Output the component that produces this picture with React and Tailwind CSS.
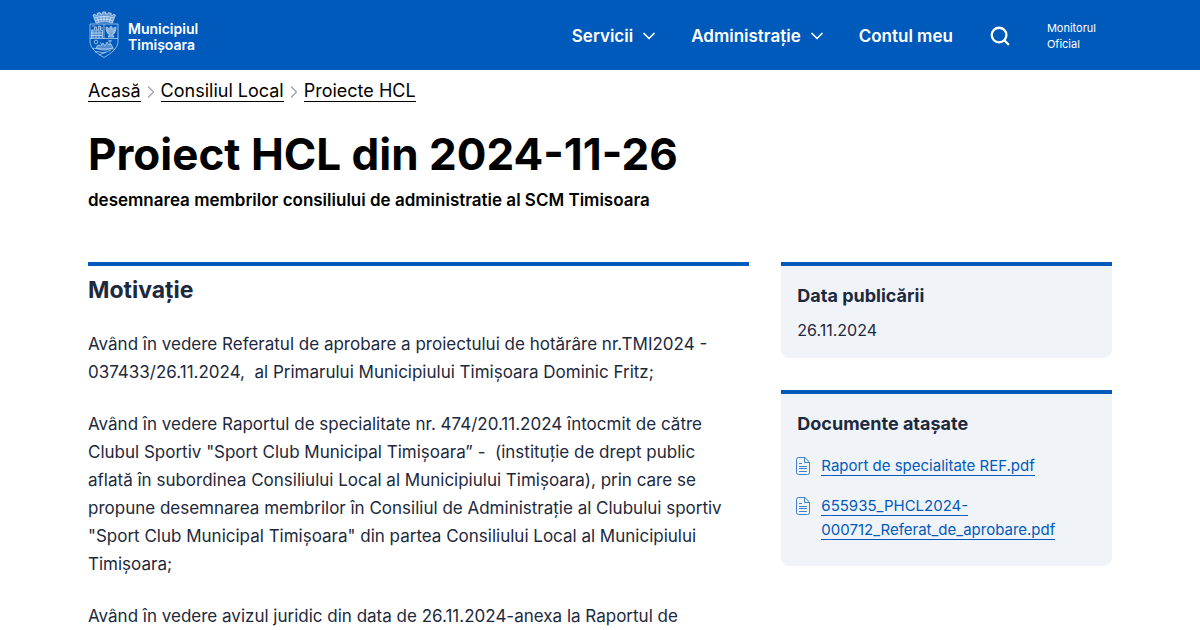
import React from 'react';
import { ChevronDown, ChevronRight, Search } from 'lucide-react';

const BREADCRUMBS = ['Acasă', 'Consiliul Local', 'Proiecte HCL'];

const DOCUMENTS = [
  'Raport de specialitate REF.pdf',
  '655935_PHCL2024-000712_Referat_de_aprobare.pdf',
];

const PARAGRAPHS = [
  'Având în vedere Referatul de aprobare a proiectului de hotărâre nr.TMI2024 - 037433/26.11.2024,\u00a0 al Primarului Municipiului Timișoara Dominic Fritz;',
  'Având în vedere Raportul de specialitate nr. 474/20.11.2024 întocmit de către Clubul Sportiv "Sport Club Municipal Timișoara” -\u00a0 (instituție de drept public aflată în subordinea Consiliului Local al Municipiului Timișoara), prin care se propune desemnarea membrilor în Consiliul de Administrație al Clubului sportiv "Sport Club Municipal Timișoara" din partea Consiliului Local al Municipiului Timișoara;',
  'Având în vedere avizul juridic din data de 26.11.2024-anexa la Raportul de',
];

const Crest = () => (
  <svg viewBox="0 0 32 48" className="w-8 h-12 shrink-0" fill="none" stroke="#fff" strokeWidth="0.7" aria-hidden="true">
    {/* mural crown */}
    <g opacity="0.9">
      <path d="M8 12 5 4l2-.8.8 1.4 1.8-.6-.5-1.7 3-.7.6 1.6 2-.2V1h3v2l2 .2.6-1.6 3 .7-.5 1.7 1.8.6.8-1.4 2 .8-3 8c-5-1.6-11-1.6-16 0Z" fill="#fff" fillOpacity="0.45" />
      <path d="M6.5 7c6-2 13-2 19 0M7.3 9.5c5.5-1.8 12-1.8 17.4 0" />
      <path d="M9.5 6.5 10.5 11M13 5.5v4.800M16 5v5M19 5.5v4.800M22.5 6.5 21.5 11" />
    </g>
    {/* shield */}
    <path d="M2 13h28v17c0 8-7.500 12.500-14 16.500C9.500 42.500 2 38 2 30Z" opacity="0.8" />
    <path d="M2 27.500h28M16 13v14.500" opacity="0.8" />
    <g opacity="0.8">
      <path d="M3.500 27v-8h3v-3h2v3h2v-4h2v4h2v8" fill="#fff" fillOpacity="0.3" />
      <path d="M3 22h12M3 24.500h12M5 19v8M8 19v8M11 19v8M4 15h3M12 17h3" />
      <path d="M23 15.500c-1.500 0-1.500 2-.5 2.500-1 .5-3-2-4.500-2 .2 4 1 6.500 3.500 7.500L20 26h6l-1.500-2.500c2.500-1 3.300-3.500 3.500-7.500-1.500 0-3.500 2.500-4.500 2 1-.5 1-2.500-.5-2.500Z" fill="#fff" fillOpacity="0.6" />
      <path d="M18.500 19l3 1.500M19 21.500l2.500 1M27.500 19l-3 1.500M27 21.500l-2.500 1" />
    </g>
    <g opacity="0.8">
      <path d="M8 37l2-3 3 1 2-3 2 3 2-4 2 3 2-1 2 4c-6 1.500-11 1.500-17 0Z" fill="#fff" fillOpacity="0.4" />
      <path d="M22 29v5M20 30h4M12 31l2 3" />
      <path d="M4.500 37.500c5-1 9 3 15 1 3-1 5-.5 7-.4M7 41c4-1.500 7 2 11 .3M11 44c3-1.500 8-3 12-5" />
      <circle cx="8" cy="31" r="1.800" />
    </g>
  </svg>
);

const FileIcon = () => (
  <svg viewBox="0 0 16 20" className="w-4 h-5 mt-0.5 shrink-0" fill="none" stroke="#005abb" strokeWidth="1" aria-hidden="true">
    <g opacity="0.75" strokeLinecap="round" strokeLinejoin="round">
      <path d="M9.500 1.500H3.500A2 2 0 0 0 1.500 3.500v13a2 2 0 0 0 2 2h9a2 2 0 0 0 2-2V6.500Z" />
      <path d="M9.500 1.500v5h5" />
      <path d="M4.500 7.500h2M4.500 10.500h7M4.500 12.500h7M4.500 15.500h7" />
    </g>
  </svg>
);

const NavItem = ({ label }) => (
  <button type="button" className="flex items-center gap-1.5 text-[17px] leading-7 font-semibold">
    {label}
    <ChevronDown className="w-5 h-5 -mr-1" strokeWidth={2} />
  </button>
);

const Card = ({ title, children }) => (
  <section className="border-t-4 border-[#005abb] rounded-b-lg bg-[#f0f4f9] p-4">
    <h3 className="text-lg font-bold">{title}</h3>
    {children}
  </section>
);

const Header = () => (
  <header className="bg-[#005abb] text-white">
    <div className="max-w-5xl mx-auto h-[70px] flex items-center justify-between">
      <a href="#" className="flex items-center gap-2 text-sm leading-4 font-semibold">
        <Crest />
        <span className="pt-1">
          Municipiul
          <br />
          Timișoara
        </span>
      </a>
      <nav className="flex items-center gap-9 pt-0.5 pr-4">
        <NavItem label="Servicii" />
        <NavItem label="Administrație" />
        <a href="#" className="text-[17px] leading-7 font-semibold">Contul meu</a>
        <button type="button" aria-label="Caută">
          <Search className="w-[22px] h-[22px]" strokeWidth={2.5} />
        </button>
        <a href="#" className="text-[11px] leading-4">
          Monitorul
          <br />
          Oficial
        </a>
      </nav>
    </div>
  </header>
);

const App = () => (
  <div className="h-screen overflow-hidden bg-white font-['Inter',sans-serif] text-slate-800">
    <Header />
    <main className="max-w-5xl mx-auto">
      <nav className="flex items-end pt-[11px] text-lg text-black">
        {BREADCRUMBS.map((item, idx) => (
          <React.Fragment key={item}>
            {idx > 0 && <ChevronRight className="w-5 h-5 text-gray-400" strokeWidth={1.5} />}
            <a href="#" className="border-b border-black leading-5">{item}</a>
          </React.Fragment>
        ))}
      </nav>

      <h1 className="mt-7 text-[44px] leading-12 font-bold text-black">Proiect HCL din 2024-11-26</h1>
      <p className="mt-2 text-[17px] leading-7 font-semibold text-black">
        desemnarea membrilor consiliului de administratie al SCM Timisoara
      </p>

      <div className="mt-12 grid grid-cols-[2fr_1fr] items-start gap-8">
        <article className="border-t-4 border-[#005abb] pt-2">
          <h2 className="text-[23px] leading-8 font-bold">Motivație</h2>
          <div className="mt-6 pr-6 flex flex-col gap-6 text-[17px] leading-7">
            {PARAGRAPHS.map((text) => (
              <p key={text}>{text}</p>
            ))}
          </div>
        </article>

        <aside className="flex flex-col gap-8">
          <Card title="Data publicării">
            <p className="mt-2">26.11.2024</p>
          </Card>
          <Card title="Documente atașate">
            <ul className="-ml-0.5 mt-4 mb-2 flex flex-col gap-4">
              {DOCUMENTS.map((name) => (
                <li key={name} className="flex items-start gap-[10px]">
                  <FileIcon />
                  <a href="#" className="text-[15px] leading-6 text-[#005abb]">
                    <span className="border-b border-[#005abb]">{name}</span>
                  </a>
                </li>
              ))}
            </ul>
          </Card>
        </aside>
      </div>
    </main>
  </div>
);

export default App;
